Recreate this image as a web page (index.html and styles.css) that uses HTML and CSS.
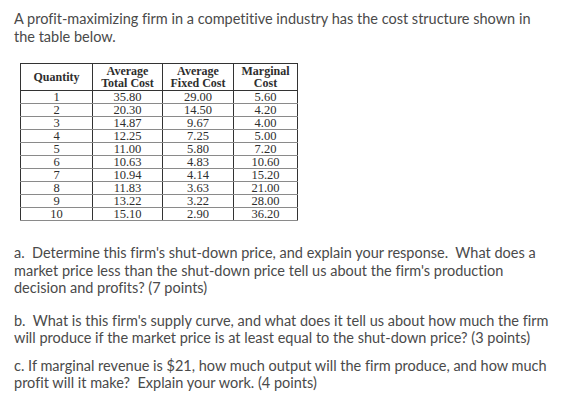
FILE: index.html
```html
<!DOCTYPE html>
<html>
<head>
<meta charset="utf-8">
<link rel="stylesheet" href="styles.css">
</head>
<body>
<div class="page">
  <p class="intro">A profit-maximizing firm in a competitive industry has the cost structure shown in<br>the table below.</p>
  <table class="costs">
    <thead>
      <tr>
        <th class="c1">Quantity</th>
        <th class="c2">Average<br>Total Cost</th>
        <th class="c3">Average<br>Fixed Cost</th>
        <th class="c4">Marginal<br>Cost</th>
      </tr>
    </thead>
    <tbody>
      <tr><td>1</td><td>35.80</td><td>29.00</td><td>5.60</td></tr>
      <tr><td>2</td><td>20.30</td><td>14.50</td><td>4.20</td></tr>
      <tr><td>3</td><td>14.87</td><td>9.67</td><td>4.00</td></tr>
      <tr><td>4</td><td>12.25</td><td>7.25</td><td>5.00</td></tr>
      <tr><td>5</td><td>11.00</td><td>5.80</td><td>7.20</td></tr>
      <tr><td>6</td><td>10.63</td><td>4.83</td><td>10.60</td></tr>
      <tr><td>7</td><td>10.94</td><td>4.14</td><td>15.20</td></tr>
      <tr><td>8</td><td>11.83</td><td>3.63</td><td>21.00</td></tr>
      <tr><td>9</td><td>13.22</td><td>3.22</td><td>28.00</td></tr>
      <tr><td>10</td><td>15.10</td><td>2.90</td><td>36.20</td></tr>
    </tbody>
  </table>
  <p class="q qa">a.&nbsp; Determine this firm's shut-down price, and explain your response.&nbsp; What does a<br>market price less than the shut-down price tell us about the firm's production<br>decision and profits? (7 points)</p>
  <p class="q qb">b.&nbsp; What is this firm's supply curve, and what does it tell us about how much the firm<br>will produce if the market price is at least equal to the shut-down price? (3 points)</p>
  <p class="q qc">c. If marginal revenue is $21, how much output will the firm produce, and how much<br>profit will it make?&nbsp; Explain your work. (4 points)</p>
</div>
</body>
</html>
```
FILE: styles.css
```css
html, body {
  margin: 0;
  padding: 0;
  background: #ffffff;
}
.page {
  padding: 10px 0 0 14px;
  font-family: Lato, "Open Sans", sans-serif;
  font-size: 14.5px;
  line-height: 17.5px;
  color: #4a4a4a;
  font-variant-ligatures: none;
}
.intro {
  margin: 0;
}
.costs {
  margin: 18px 0 0 6px;
  border-collapse: collapse;
  font-family: "Liberation Serif", "Times New Roman", serif;
  font-size: 12.5px;
  color: #2e2e2e;
  text-align: center;
  border: 1px solid #333;
}
.costs th {
  font-weight: bold;
  font-size: 12px;
  line-height: 12.5px;
  height: 26px;
  padding: 0;
  border: 1px solid #333;
  vertical-align: middle;
}
.costs td {
  line-height: 12px;
  height: 12px;
  padding: 0;
  border-left: 1px solid #333;
  border-right: 1px solid #333;
  border-top: 1px solid #8a8a8a;
  border-bottom: 1px solid #8a8a8a;
}
.c1 { width: 71px; }
.c2 { width: 69px; }
.c3 { width: 70px; }
.c4 { width: 63px; }
.q {
  margin: 0;
}
.qa { margin-top: 23px; }
.qb { margin-top: 15px; }
.qc { margin-top: 10px; }
```
